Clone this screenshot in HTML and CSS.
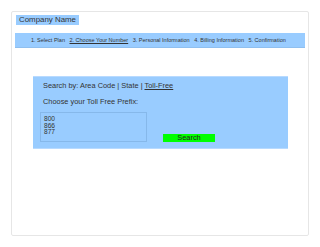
FILE: index.html
```html
<!DOCTYPE html>
<html lang="en">
<head>
  <meta charset="UTF-8">
  <title>Toll Free Search</title>
  <link rel="stylesheet" href="styles.css">
</head>
<body>
  <div class="frame">
    <div class="brand">Company Name</div>
    <div class="steps">
      <span>1. Select Plan</span>
      <a href="#">2. Choose Your Number</a>
      <span>3. Personal Information</span>
      <span>4. Billing Information</span>
      <span>5. Confirmation</span>
    </div>
    <div class="search">
      <p class="by">Search by: Area Code | State | <a href="#">Toll-Free</a></p>
      <p class="label">Choose your Toll Free Prefix:</p>
      <div class="row">
        <div class="prefixes">
          <div>800</div>
          <div>866</div>
          <div>877</div>
        </div>
        <button class="go">Search</button>
      </div>
    </div>
  </div>
</body>
</html>
```

FILE: styles.css
```css
body {
  margin: 0;
  font-family: 'Liberation Sans', Arial, sans-serif;
  color: #333;
  background: #fff;
}

.frame {
  margin: 11px 0 0 11px;
  width: 296px;
  height: 223px;
  border: 1px solid #e6e6e6;
  border-radius: 2px;
  box-sizing: content-box;
}

.brand {
  width: fit-content;
  margin: 3px 0 0 4px;
  padding: 0 3px 0 3px;
  height: 10px;
  line-height: 10px;
  font-size: 7.9px;
  background: #99ccff;
}

.steps {
  margin: 8px 3px 0 3px;
  height: 15px;
  line-height: 15px;
  padding-left: 16px;
  font-size: 5.5px;
  background: #99ccff;
  border-bottom: 1px solid #8fbfef;
  box-sizing: border-box;
  white-space: nowrap;
}

.steps span, .steps a {
  margin-right: 3px;
}

.steps a {
  color: #333;
}

.search {
  margin: 28px 0 0 21px;
  width: 255px;
  height: 73px;
  padding: 4px 0 0 10px;
  box-sizing: border-box;
  background: #99ccff;
  border-top: 1px solid #b8daff;
  border-bottom: 1px solid #b8daff;
}

.search p {
  margin: 0;
  font-size: 7.4px;
  line-height: 10px;
}

.by a {
  color: #333;
}

.label {
  padding-top: 6px;
}

.row {
  display: flex;
  align-items: flex-end;
  margin: 5px 0 0 -3px;
}

.prefixes {
  width: 107px;
  height: 30px;
  padding: 3px 0 0 3px;
  box-sizing: border-box;
  border: 1px solid #86b8ea;
  font-size: 6.6px;
  line-height: 6.6px;
}

.go {
  margin: 0 0 0 16px;
  width: 52px;
  height: 8px;
  padding: 0;
  border: none;
  background: #00ff00;
  font-family: 'Liberation Sans', Arial, sans-serif;
  font-size: 7.4px;
  line-height: 8px;
  color: #222;
}
```
